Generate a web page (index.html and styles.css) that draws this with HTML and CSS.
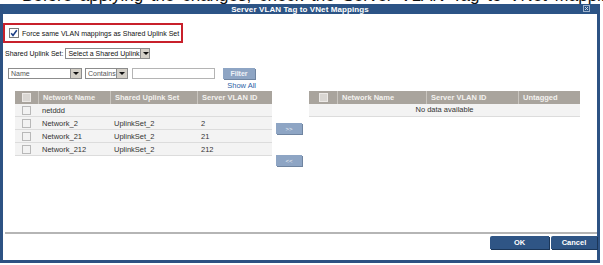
FILE: index.html
```html
<!DOCTYPE html>
<html>
<head>
<meta charset="utf-8">
<link rel="stylesheet" href="styles.css">
</head>
<body>
<div class="behind"><span class="behind-text">Before applying the changes, check the Server VLAN Tag to VNet Mappings</span></div>
<div class="dialog">
  <div class="titlebar">
    <span class="title">Server VLAN Tag to VNet Mappings</span>
    <span class="close"><svg width="7" height="7" viewBox="0 0 7 7"><rect x="0.5" y="0.5" width="6" height="6" fill="none" stroke="#9fb3cc"/><path d="M2 2L5 5M5 2L2 5" stroke="#c8d4e2" stroke-width="1"/></svg></span>
  </div>
  <div class="body">
    <div class="force">
      <span class="cb cb-checked"><svg width="10" height="10" viewBox="0 0 10 10"><rect x="0.5" y="0.5" width="9" height="9" fill="#fff" stroke="#7a7a7a"/><path d="M2.2 5.2L4 7.4L7.8 2.2" fill="none" stroke="#1d3f86" stroke-width="1.6"/></svg></span>
      <span class="force-label">Force same VLAN mappings as Shared Uplink Set</span>
    </div>
    <div class="uplink-row">
      <span class="lbl">Shared Uplink Set:</span>
      <span class="select sel-uplink"><span class="sel-text">Select a Shared Uplink</span><span class="arrow"></span></span>
    </div>
    <div class="filter-row">
      <span class="select sel-name"><span class="sel-text">Name</span><span class="arrow"></span></span>
      <span class="select sel-contains"><span class="sel-text">Contains</span><span class="arrow"></span></span>
      <span class="textbox"></span>
      <span class="filter-btn">Filter</span>
    </div>
    <div class="tables">
      <div class="left-col">
        <div class="showall">Show All</div>
        <div class="grid grid-left">
          <div class="hd"><span class="c-cb"><span class="hcb"></span></span><span>Network Name</span><span>Shared Uplink Set</span><span>Server VLAN ID</span></div>
          <div class="row"><span class="c-cb"><span class="rcb"></span></span><span>netddd</span><span></span><span></span></div>
          <div class="row"><span class="c-cb"><span class="rcb"></span></span><span>Network_2</span><span>UplinkSet_2</span><span>2</span></div>
          <div class="row"><span class="c-cb"><span class="rcb"></span></span><span>Network_21</span><span>UplinkSet_2</span><span>21</span></div>
          <div class="row"><span class="c-cb"><span class="rcb"></span></span><span>Network_212</span><span>UplinkSet_2</span><span>212</span></div>
        </div>
      </div>
      <div class="move">
        <span class="mv-btn mv-add">&gt;&gt;</span>
        <span class="mv-btn mv-rem">&lt;&lt;</span>
      </div>
      <div class="right-col">
        <div class="grid grid-right">
          <div class="hd"><span class="c-cb"><span class="hcb"></span></span><span>Network Name</span><span>Server VLAN ID</span><span>Untagged</span></div>
          <div class="nodata">No data available</div>
        </div>
      </div>
    </div>
  </div>
  <div class="footer">
    <span class="btn">OK</span>
    <span class="btn">Cancel</span>
  </div>
</div>
</body>
</html>
```
FILE: styles.css
```css
html, body {
  margin: 0;
  padding: 0;
  background: #fff;
  font-family: "Liberation Sans", Arial, sans-serif;
}
.behind {
  height: 4px;
  overflow: hidden;
}
.behind-text {
  display: block;
  font-size: 17px;
  line-height: 17px;
  margin-top: -13px;
  padding-left: 22px;
  white-space: nowrap;
  color: #111;
  word-spacing: 3px;
}
.dialog {
  width: 594px;
  height: 256px;
  border: 3px solid #2d5283;
  border-top: none;
  display: flex;
  flex-direction: column;
}
.titlebar {
  height: 10px;
  background: #2c5486;
  display: flex;
  align-items: center;
  justify-content: center;
  position: relative;
}
.title {
  color: #fff;
  font-weight: bold;
  font-size: 8px;
  letter-spacing: 0.1px;
}
.close {
  position: absolute;
  right: 7px;
  top: 1px;
  line-height: 0;
}
.body {
  flex: 1;
  display: flex;
  flex-direction: column;
}
.force {
  margin-top: 9px;
  width: 172px;
  height: 16px;
  border: 2px solid #c8202b;
  display: flex;
  align-items: center;
  padding-left: 4px;
  gap: 3px;
}
.cb { line-height: 0; }
.force-label {
  font-size: 7px;
  color: #111;
  white-space: nowrap;
}
.uplink-row {
  margin-top: 5px;
  display: flex;
  align-items: center;
  padding-left: 2px;
  gap: 2px;
  font-size: 7px;
  color: #111;
  white-space: nowrap;
}
.select {
  display: inline-flex;
  align-items: stretch;
  height: 11px;
  border: 1px solid #8c8c8c;
  background: #fff;
  box-sizing: border-box;
}
.sel-text {
  flex: 1;
  font-size: 7px;
  line-height: 9px;
  padding-left: 2px;
  color: #222;
  white-space: nowrap;
}
.sel-uplink { width: 85px; }
.sel-uplink .sel-text { color: #111; }
.arrow {
  width: 10px;
  background: #d4d0c8;
  border-left: 1px solid #8c8c8c;
  position: relative;
}
.arrow::after {
  content: "";
  position: absolute;
  left: 2px;
  top: 3px;
  border-left: 3px solid transparent;
  border-right: 3px solid transparent;
  border-top: 3px solid #111;
}
.filter-row {
  margin-top: 9px;
  padding-left: 5px;
  display: flex;
  align-items: center;
  gap: 3px;
}
.sel-name { width: 74px; }
.sel-name .sel-text, .sel-contains .sel-text { color: #555; }
.sel-contains { width: 43px; }
.textbox {
  width: 83px;
  height: 11px;
  margin-left: 1px;
  border: 1px solid #b4b4b4;
  box-sizing: border-box;
}
.filter-btn {
  margin-left: 5px;
  width: 32px;
  height: 11px;
  background: #8ea5c4;
  color: #eef2f7;
  font-size: 7px;
  font-weight: bold;
  display: flex;
  align-items: center;
  justify-content: center;
  box-shadow: 1px 1px 0 #6f84a0;
}
.tables {
  display: flex;
  align-items: flex-start;
  margin-top: 1px;
}
.left-col {
  margin-left: 12px;
  width: 257px;
  display: flex;
  flex-direction: column;
}
.showall {
  text-align: right;
  padding-right: 16px;
  font-size: 7.5px;
  color: #2e5fa6;
  height: 11px;
  line-height: 11px;
}
.grid { font-size: 7.5px; color: #333; }
.hd {
  display: grid;
  height: 13px;
  background: #a9a49d;
  color: #f4f2ef;
  font-weight: bold;
  align-items: center;
}
.hd > span { border-left: 1px solid #c9c5bf; padding-left: 4px; height: 13px; line-height: 13px; white-space: nowrap; }
.hd > span.c-cb { border-left: none; padding-left: 0; display: flex; align-items: center; justify-content: center; }
.grid-left .hd, .grid-left .row { grid-template-columns: 23px 72px 87px 75px; }
.grid-right .hd { grid-template-columns: 28px 89px 92px 62px; }
.hcb {
  width: 7px;
  height: 7px;
  background: #d9d6d2;
  border: 1px solid #ece9e6;
}
.row {
  display: grid;
  height: 13px;
  background: #f3f3f3;
  border-bottom: 1px solid #dcdcdc;
  align-items: center;
  box-sizing: border-box;
  color: #333;
}
.row > span { padding-left: 4px; white-space: nowrap; color: #333; }
.row > span.c-cb { padding-left: 0; display: flex; justify-content: center; }
.rcb {
  width: 7px;
  height: 7px;
  border: 1px solid #b8b8b8;
  background: #f2f2f2;
}
.move {
  width: 26px;
  margin-left: 4px;
  padding-top: 43px;
  display: flex;
  flex-direction: column;
  gap: 21px;
}
.mv-btn {
  width: 26px;
  height: 11px;
  background: #8ea5c4;
  color: #eef2f7;
  font-size: 6px;
  display: flex;
  align-items: center;
  justify-content: center;
  box-shadow: 1px 1px 0 #6f84a0;
}
.right-col {
  margin-left: 7px;
  padding-top: 11px;
  width: 271px;
}
.nodata {
  height: 12px;
  line-height: 12px;
  text-align: center;
  background: #f3f3f3;
  border-bottom: 1px solid #dcdcdc;
  font-size: 7.5px;
  color: #333;
}
.footer {
  margin: 0 0 0 2px;
  border-top: 2px solid #b5b5b5;
  height: 28px;
  display: flex;
  justify-content: flex-end;
  align-items: flex-start;
  gap: 2px;
  padding-top: 2px;
  box-sizing: border-box;
}
.btn {
  width: 46px;
  height: 13px;
  background: #2f5585;
  color: #fff;
  font-weight: bold;
  font-size: 7.5px;
  display: flex;
  align-items: center;
  justify-content: center;
  box-shadow: 1px 1px 0 #1b3658;
  border-top-left-radius: 2px;
}
.btn:first-child { width: 59px; }
```
